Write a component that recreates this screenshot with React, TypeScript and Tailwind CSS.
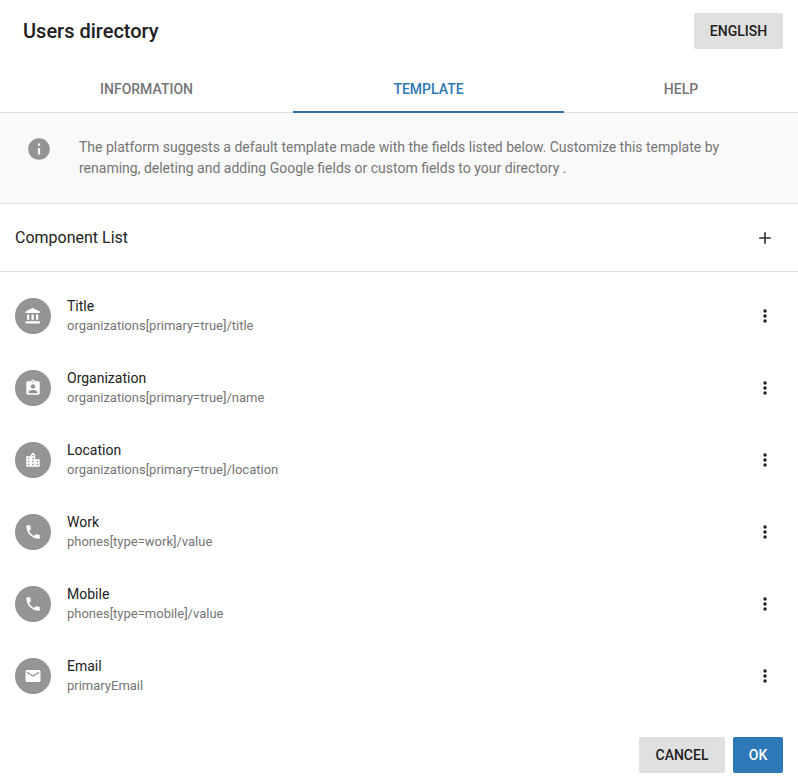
const ICONS = {
  balance: 'M4 10v7h3v-7H4zm6 0v7h3v-7h-3zM2 22h19v-3H2v3zm14-12v7h3v-7h-3zm-4.5-9L2 6v2h19V6l-9.5-5z',
  badge: 'M19 3h-4.18C14.4 1.84 13.3 1 12 1c-1.3 0-2.4.84-2.82 2H5c-1.1 0-2 .9-2 2v14c0 1.1.9 2 2 2h14c1.1 0 2-.9 2-2V5c0-1.1-.9-2-2-2zm-7 0c.55 0 1 .45 1 1s-.45 1-1 1-1-.45-1-1 .45-1 1-1zm0 4c1.66 0 3 1.34 3 3s-1.34 3-3 3-3-1.34-3-3 1.34-3 3-3zm6 12H6v-1.4c0-2 4-3.1 6-3.1s6 1.1 6 3.1V19z',
  city: 'M15 11V5l-3-3-3 3v2H3v14h18V11h-6zm-8 8H5v-2h2v2zm0-4H5v-2h2v2zm0-4H5V9h2v2zm6 8h-2v-2h2v2zm0-4h-2v-2h2v2zm0-4h-2V9h2v2zm0-4h-2V5h2v2zm6 12h-2v-2h2v2zm0-4h-2v-2h2v2z',
  phone: 'M6.62 10.79c1.44 2.83 3.76 5.14 6.59 6.59l2.2-2.2c.27-.27.67-.36 1.02-.24 1.12.37 2.33.57 3.57.57.55 0 1 .45 1 1V20c0 .55-.45 1-1 1-9.39 0-17-7.61-17-17 0-.55.45-1 1-1h3.5c.55 0 1 .45 1 1 0 1.25.2 2.45.57 3.57.11.35.03.74-.25 1.02l-2.2 2.2z',
  email: 'M20 4H4c-1.1 0-1.99.9-1.99 2L2 18c0 1.1.9 2 2 2h16c1.1 0 2-.9 2-2V6c0-1.1-.9-2-2-2zm0 4l-8 5-8-5V6l8 5 8-5v2z',
  info: 'M12 2C6.48 2 2 6.48 2 12s4.48 10 10 10 10-4.48 10-10S17.52 2 12 2zm1 15h-2v-6h2v6zm0-8h-2V7h2v2z',
  more: 'M12 8c1.1 0 2-.9 2-2s-.9-2-2-2-2 .9-2 2 .9 2 2 2zm0 2c-1.1 0-2 .9-2 2s.9 2 2 2 2-.9 2-2-.9-2-2-2zm0 6c-1.1 0-2 .9-2 2s.9 2 2 2 2-.9 2-2-.9-2-2-2z',
  add: 'M19 13h-6v6h-2v-6H5v-2h6V5h2v6h6v2z',
};

const FIELDS = [
  { name: 'Title', path: 'organizations[primary=true]/title', icon: ICONS.balance },
  { name: 'Organization', path: 'organizations[primary=true]/name', icon: ICONS.badge },
  { name: 'Location', path: 'organizations[primary=true]/location', icon: ICONS.city },
  { name: 'Work', path: 'phones[type=work]/value', icon: ICONS.phone },
  { name: 'Mobile', path: 'phones[type=mobile]/value', icon: ICONS.phone },
  { name: 'Email', path: 'primaryEmail', icon: ICONS.email },
];

function Icon({ d, className }: { d: string; className: string }) {
  return (
    <svg viewBox="0 0 24 24" fill="currentColor" className={className}>
      <path d={d} />
    </svg>
  );
}

export default function App() {
  return (
    <div className="w-[798px] h-[783px] bg-white flex flex-col font-['Roboto',sans-serif] overflow-hidden">
      <div className="h-[68px] flex items-start justify-between pl-[23px] pr-[15px] pt-[13px]">
        <h1 className="text-[20px] leading-[36px] font-medium text-[#212121]">Users directory</h1>
        <button className="w-[89px] h-9 rounded-[2px] bg-[#e0e0e0] text-[14px] font-medium text-[#212121]">ENGLISH</button>
      </div>

      <div className="h-[45px] flex border-b border-[#e0e0e0] text-[14px] font-medium text-[#757575]">
        <div className="w-[293px] h-[45px] flex items-center justify-center pb-[2px]">INFORMATION</div>
        <div className="w-[271px] h-[45px] flex items-center justify-center text-[#2e78b7] border-b-2 border-[#2e6dab]">TEMPLATE</div>
        <div className="flex-1 h-[45px] flex items-center justify-center pb-[2px]">HELP</div>
      </div>

      <div className="h-[91px] flex bg-[#f9f9f9] border-b border-[#e0e0e0] pl-[28px] pt-[24px]">
        <Icon d={ICONS.info} className="w-[26px] h-[26px] -ml-[2px] -mt-[1px] text-[#949494] shrink-0" />
        <p className="ml-[27px] w-[680px] text-[14px] leading-[21px] text-[#757575]">
          The platform suggests a default template made with the fields listed below. Customize this template by renaming, deleting and adding Google fields or custom fields to your directory .
        </p>
      </div>

      <div className="h-[68px] flex items-center justify-between border-b border-[#e0e0e0] pl-[15px] pr-[23px]">
        <span className="text-[16px] text-[#212121]">Component List</span>
        <Icon d={ICONS.add} className="w-5 h-5 text-[#333333]" />
      </div>

      <div className="flex flex-col pt-2">
        {FIELDS.map((f) => (
          <div key={f.name} className="h-[72px] flex items-center pl-[15px] pr-[23px]">
            <div className="w-9 h-9 rounded-full bg-[#949494] flex items-center justify-center shrink-0">
              <Icon d={f.icon} className="w-[18px] h-[18px] text-white" />
            </div>
            <div className="ml-4 flex-1">
              <div className="text-[14px] leading-[19px] text-[#212121]">{f.name}</div>
              <div className="text-[13px] leading-[19px] text-[#757575]">{f.path}</div>
            </div>
            <Icon d={ICONS.more} className="w-5 h-5 text-[#212121]" />
          </div>
        ))}
      </div>

      <div className="flex justify-end gap-2 pr-[15px] mt-[25px]">
        <button className="w-[86px] h-9 rounded-[2px] bg-[#e0e0e0] text-[14px] font-medium text-[#212121]">CANCEL</button>
        <button className="w-[50px] h-9 rounded-[2px] bg-[#2e78b7] text-[14px] font-medium text-white">OK</button>
      </div>
    </div>
  );
}
